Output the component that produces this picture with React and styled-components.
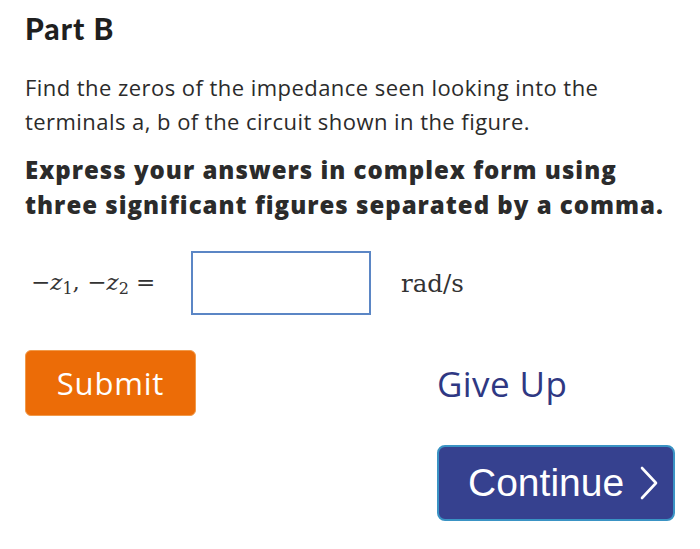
import React from "react";
import styled, { createGlobalStyle } from "styled-components";

const Global = createGlobalStyle`
  html, body { margin: 0; padding: 0; background: #fff; }
  body { font-family: "Open Sans", Lato, sans-serif; color: #222; }
`;

const Page = styled.div`
  width: 700px;
  height: 549px;
  box-sizing: border-box;
  padding: 8px 25px 0 25px;
  display: flex;
  flex-direction: column;
`;

const Title = styled.h2`
  margin: 0;
  font-family: Lato, sans-serif;
  font-weight: 900;
  font-size: 30px;
  line-height: 40px;
  letter-spacing: 1px;
  color: #1f1f1f;
`;

const Body = styled.p`
  margin: 22px 0 0 0;
  font-family: "Open Sans", sans-serif;
  font-size: 22px;
  line-height: 34px;
  letter-spacing: 0.45px;
  color: #2b2b2b;
`;

const Instruction = styled.p`
  margin: 14px 0 0 0;
  font-family: "Open Sans", sans-serif;
  font-weight: 800;
  font-size: 24px;
  line-height: 35px;
  letter-spacing: 1px;
  color: #2b2b2b;
`;

const EquationRow = styled.div`
  display: flex;
  align-items: center;
  margin-top: 29px;
  padding-left: 6px;
`;

const MathLabel = styled.span`
  font-family: "DejaVu Serif", "Liberation Serif", serif;
  font-size: 23px;
  color: #333;
  width: 160px;
  white-space: nowrap;
  i { font-style: italic; }
  sub { font-size: 16px; vertical-align: -4px; font-style: normal; }
`;

const AnswerBox = styled.div`
  width: 176px;
  height: 60px;
  border: 2px solid #5b86c5;
  box-sizing: content-box;
  background: #fff;
`;

const Unit = styled.span`
  margin-left: 30px;
  font-family: "DejaVu Serif", "Liberation Serif", serif;
  font-size: 24.5px;
  color: #333;
`;

const ActionRow = styled.div`
  display: flex;
  align-items: center;
  margin-top: 35px;
`;

const SubmitButton = styled.button`
  width: 171px;
  height: 66px;
  border: 1px solid #f19a4a;
  border-radius: 6px;
  background: #ec6c07;
  color: #fff;
  font-family: "Open Sans", sans-serif;
  font-size: 31px;
  letter-spacing: 0.8px;
  padding: 0;
`;

const GiveUp = styled.span`
  margin-left: 241px;
  font-family: "Open Sans", sans-serif;
  font-size: 35px;
  letter-spacing: 0.4px;
  color: #2f3883;
`;

const ContinueRow = styled.div`
  display: flex;
  justify-content: flex-start;
  padding-left: 412px;
  margin-top: 29px;
`;

const ContinueButton = styled.button`
  width: 238px;
  height: 76px;
  border: 2px solid #3a93c4;
  border-radius: 8px;
  background: #36418f;
  color: #fff;
  font-family: "Liberation Sans", Arial, sans-serif;
  font-size: 39px;
  display: flex;
  align-items: center;
  justify-content: flex-start;
  gap: 15px;
  padding: 0 0 0 29px;
`;

const Chevron = styled.svg`
  width: 20px;
  height: 34px;
  flex: none;
`;

export default function App() {
  return (
    <>
      <Global />
      <Page>
        <Title>Part B</Title>
        <Body>
          Find the zeros of the impedance seen looking into the
          <br />
          terminals a, b of the circuit shown in the figure.
        </Body>
        <Instruction>
          Express your answers in complex form using
          <br />
          three significant figures separated by a comma.
        </Instruction>
        <EquationRow>
          <MathLabel>
            −<i>z</i><sub>1</sub>, −<i>z</i><sub>2</sub> =
          </MathLabel>
          <AnswerBox />
          <Unit>rad/s</Unit>
        </EquationRow>
        <ActionRow>
          <SubmitButton>Submit</SubmitButton>
          <GiveUp>Give Up</GiveUp>
        </ActionRow>
        <ContinueRow>
          <ContinueButton>
            Continue
            <Chevron viewBox="0 0 20 34">
              <path d="M3 2 L17 17 L3 32" fill="none" stroke="#fff" strokeWidth="2.6" strokeLinecap="round" strokeLinejoin="round" />
            </Chevron>
          </ContinueButton>
        </ContinueRow>
      </Page>
    </>
  );
}
